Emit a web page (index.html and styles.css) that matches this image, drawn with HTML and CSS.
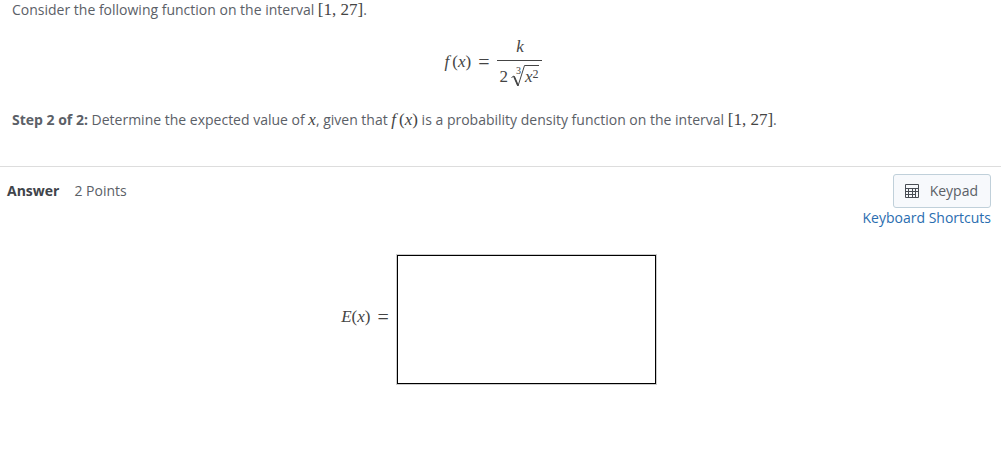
FILE: index.html
```html
<!DOCTYPE html>
<html lang="en">
<head>
    <meta charset="utf-8">
    <meta name="viewport" content="width=device-width, initial-scale=1">
    <title>Expected Value</title>
    <link rel="stylesheet" href="styles.css">
</head>
<body>

<div class="question">
    <p>Consider the following function on the interval <span class="math">[1, 27]</span>.</p>

    <div class="equation">
        <span class="math"><i class="func">f</i>(<i>x</i>)</span>
        <span class="math equals">=</span>
        <div class="fraction">
            <div class="numerator"><i>k</i></div>
            <div class="denominator">
                <span>2</span>
                <div class="root">
                    <span class="root-index">3</span>
                    <svg class="root-sign" width="14" height="22" viewBox="0 0 14 22" aria-hidden="true">
                        <path d="M0.5 12.5 L3 11 L7 21 L13.5 0.5 H14" fill="none" stroke="#444" stroke-width="1"/>
                        <path d="M3 11.5 L7 20.5" fill="none" stroke="#444" stroke-width="1.8"/>
                    </svg>
                    <div class="radicand"><i>x</i><sup>2</sup></div>
                </div>
            </div>
        </div>
    </div>

    <p><b>Step 2 of 2:</b> Determine the expected value of <i class="math">x</i>, given that <span class="math"><i class="func">f</i>(<i>x</i>)</span> is a probability density function on the interval <span class="math">[1, 27]</span>.</p>
</div>

<div class="answer">
    <div class="answer-header">
        <div class="answer-title"><b>Answer</b><span>2 Points</span></div>
        <div class="tools">
            <button type="button" class="keypad">
                <svg width="14" height="15" viewBox="0 0 14 15" aria-hidden="true">
                    <path d="M0.5 0.5 H13.5 V13.5 H0.5 Z M0.5 4.5 H13.5 M0.5 7.5 H13.5 M0.5 10.5 H10.5 M3.5 4.5 V14 M7.5 4.5 V14 M10.5 4.5 V14" fill="none" stroke="#484d54" stroke-width="1"/>
                </svg>
                Keypad
            </button>
            <a href="#">Keyboard Shortcuts</a>
        </div>
    </div>

    <div class="answer-row">
        <label class="math" for="answer"><i>E</i>(<i>x</i>)</label>
        <span class="math equals">=</span>
        <input type="text" id="answer" class="answer-box" autocomplete="off">
    </div>
</div>

</body>
</html>
```
FILE: styles.css
```css
body {
    margin: 0;
    background: #fff;
    color: #5b6067;
    font-family: "Open Sans", sans-serif;
    font-size: 14px;
    line-height: 20px;
}

p {
    margin: 0;
}

.question {
    padding: 0 12px 36px;
    border-bottom: 1px solid #ddd;
}

.math,
.fraction {
    color: #444;
    font-family: "Liberation Serif", serif;
    font-size: 17px;
}

.math {
    line-height: 16px;
}

.func {
    margin-right: 3px;
}

.equals {
    margin: 0 8px 0 7px;
    font-size: 20px;
}

.equation {
    display: flex;
    justify-content: center;
    align-items: center;
    padding: 17px 0 19px;
    margin-right: 14px;
}

.equation > .math,
.answer-row > .math {
    padding-bottom: 5px;
}

.fraction {
    padding-bottom: 4px;
    text-align: center;
}

.numerator {
    height: 23px;
    border-bottom: 1px solid #444;
}

.denominator {
    display: flex;
    gap: 3px;
    height: 26px;
    padding: 4px 3px 0 2px;
    line-height: 24px;
    box-sizing: border-box;
}

.root {
    position: relative;
    display: flex;
}

.root-index {
    position: absolute;
    left: 5px;
    top: 1px;
    font-size: 10px;
    line-height: 10px;
}

.radicand {
    height: 20px;
    padding-right: 1px;
    border-top: 1px solid #444;
    line-height: 22px;
}

.radicand sup {
    font-size: 12px;
    line-height: 12px;
    vertical-align: 4px;
}

.answer-header {
    display: flex;
    justify-content: space-between;
    padding: 7px 10px 0 7px;
}

.answer-title {
    display: flex;
    gap: 15px;
    padding-top: 7px;
}

.answer-title b {
    color: #40444a;
}

.tools {
    display: flex;
    flex-direction: column;
    align-items: flex-end;
}

.keypad {
    display: flex;
    align-items: center;
    gap: 11px;
    height: 34px;
    padding: 0 12px 0 11px;
    border: 1px solid #c0d0da;
    border-radius: 3px;
    background: #f7f9fc;
    color: #5b6067;
    font: inherit;
}

.tools a {
    color: #2a6db0;
    text-decoration: none;
}

.answer-row {
    display: flex;
    justify-content: center;
    align-items: center;
    padding: 27px 0;
    margin-right: 4px;
}

.answer-box {
    box-sizing: border-box;
    width: 259px;
    height: 129px;
    padding: 8px;
    border: 1px solid #000;
    outline: 1px solid #ccc;
    font-size: 16px;
}
```
